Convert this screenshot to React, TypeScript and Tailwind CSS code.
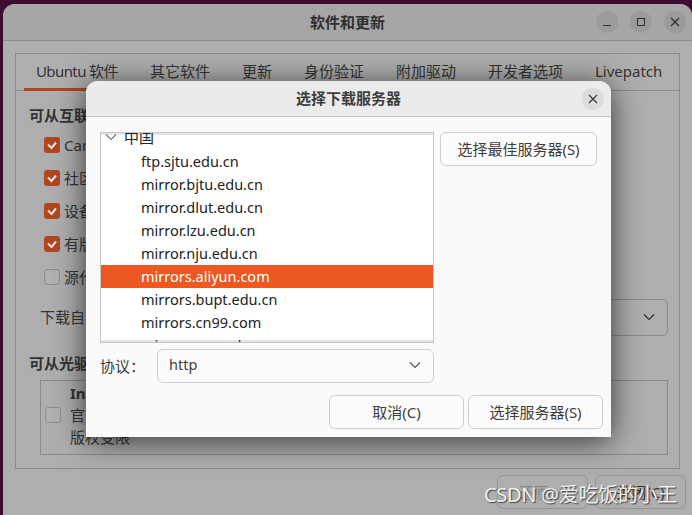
const font = { fontFamily: '"Noto Sans", "Noto Sans CJK SC", sans-serif' };

const servers = [
  'ftp.sjtu.edu.cn',
  'mirror.bjtu.edu.cn',
  'mirror.dlut.edu.cn',
  'mirror.lzu.edu.cn',
  'mirror.nju.edu.cn',
  'mirrors.aliyun.com',
  'mirrors.bupt.edu.cn',
  'mirrors.cn99.com',
  'mirrors.cqu.edu.cn',
];

const tabs = ['Ubuntu 软件', '其它软件', '更新', '身份验证', '附加驱动', '开发者选项', 'Livepatch'];

const sources = ['Canonical', '社区维护', '设备驱动', '有版权', '源代码'];

function Check({ on }: { on?: boolean }) {
  if (!on) return <span className="block w-4 h-4 rounded-[3px] border border-[#8c8c8c] bg-[#b0b0b0] shrink-0" />;
  return (
    <span className="flex items-center justify-center w-4 h-4 rounded-[3px] bg-[#b0461e] shrink-0">
      <svg width="12" height="12" viewBox="0 0 12 12" fill="none" stroke="#e6e6e6" strokeWidth="2">
        <path d="M2 5.5 5.5 9 10 3.5" />
      </svg>
    </span>
  );
}

function Chevron({ color }: { color: string }) {
  return (
    <svg width="12" height="8" viewBox="0 0 12 8" fill="none" stroke={color} strokeWidth="1.2">
      <path d="M1 1.5 6 6.5 11 1.5" />
    </svg>
  );
}

function Cross({ color }: { color: string }) {
  return (
    <svg width="10" height="10" viewBox="0 0 10 10" fill="none" stroke={color} strokeWidth="1.3">
      <path d="M1 1 9 9M9 1 1 9" />
    </svg>
  );
}

function Dialog() {
  return (
    <div className="absolute left-[86px] top-[81px] w-[525px] h-[356px] bg-[#fafafa] rounded-t-xl shadow-[0_4px_30px_rgba(0,0,0,0.7)] flex flex-col">
      <div className="h-[36px] shrink-0 bg-[#ebebeb] border-b border-[#c4c4c4] rounded-t-xl flex items-center justify-center relative">
        <span className="text-[15px] font-bold text-[#3d3d3d]">选择下载服务器</span>
        <span className="absolute right-[7px] top-[7px] w-[22px] h-[22px] rounded-full bg-[#dcdcdc] flex items-center justify-center">
          <Cross color="#3d3d3d" />
        </span>
      </div>
      <div className="flex flex-col pl-[14px] pt-[15px] pr-[8px]">
        <div className="flex gap-[6px]">
          <div className="w-[334px] h-[211px] bg-white border border-[#c6c6c6] overflow-hidden shadow-[inset_0_2px_0_#e6e6e6,inset_0_-2px_0_#e6e6e6]">
            <div className="-mt-[6px]">
              <div className="h-[23px] flex items-center gap-[7px] pl-[4px] pb-[3px] text-[15px] text-[#222]">
                <Chevron color="#777" />
                <span>中国</span>
              </div>
              {servers.map((s) => (
                <div
                  key={s}
                  className={
                    s === 'mirrors.aliyun.com'
                      ? 'h-[23px] flex items-center pl-[40px] text-[14.5px] bg-[#ec5722] text-[#fff]'
                      : 'h-[23px] flex items-center pl-[40px] text-[14.5px] text-[#222]'
                  }
                >
                  {s}
                </div>
              ))}
            </div>
          </div>
          <button className="w-[157px] h-[34px] rounded-md border border-[#cdcdcd] bg-[#fcfcfc] text-[15px] text-[#3d3d3d]">
            选择最佳服务器(S)
          </button>
        </div>
        <div className="flex items-center mt-[6px] w-[334px]">
          <span className="w-[57px] text-[15px] text-[#3d3d3d]">协议：</span>
          <div className="flex-1 h-[34px] rounded-md border border-[#cdcdcd] bg-[#fcfcfc] flex items-center justify-between pl-[11px] pr-[12px] pb-[2px] text-[14.5px] text-[#3d3d3d]">
            <span>http</span>
            <Chevron color="#555" />
          </div>
        </div>
        <div className="flex justify-end gap-[4px] mt-[12px]">
          <button className="w-[135px] h-[34px] rounded-md border border-[#cdcdcd] bg-[#fcfcfc] text-[15px] text-[#3d3d3d]">取消(C)</button>
          <button className="w-[135px] h-[34px] rounded-md border border-[#cdcdcd] bg-[#fcfcfc] text-[15px] text-[#3d3d3d]">选择服务器(S)</button>
        </div>
      </div>
    </div>
  );
}

export default function App() {
  return (
    <div className="relative w-[692px] h-[515px] overflow-hidden bg-[#3d0c33] pl-[3px] pt-[4px] text-[#333]" style={font}>
      <div className="w-[689px] h-[511px] bg-[#aeaeae] rounded-t-xl flex flex-col">
        <div className="h-[37px] shrink-0 bg-[#a6a6a6] border-b border-[#8a8a8a] rounded-t-xl flex items-center justify-center relative">
          <span className="text-[15px] font-bold text-[#2f2f2f]">软件和更新</span>
          <div className="absolute right-[6px] top-[7px] flex gap-[12px]">
            <span className="w-[22px] h-[22px] rounded-full bg-[#9b9b9b] flex items-center justify-center">
              <span className="block w-[8px] h-px bg-[#2f2f2f] mt-[7px]" />
            </span>
            <span className="w-[22px] h-[22px] rounded-full bg-[#9b9b9b] flex items-center justify-center">
              <span className="block w-[8px] h-[8px] border border-[#2f2f2f]" />
            </span>
            <span className="w-[22px] h-[22px] rounded-full bg-[#9b9b9b] flex items-center justify-center">
              <Cross color="#2f2f2f" />
            </span>
          </div>
        </div>
        <div className="mx-[12px] mt-[12px] h-[416px] border border-[#8a8a8a] flex flex-col">
          <div className="h-[37px] shrink-0 border-b border-[#8a8a8a] flex items-end pl-[8px] text-[15px] text-[#333] whitespace-nowrap">
            {tabs.map((t, i) => (
              <span
                key={t}
                className={
                  i === 0
                    ? 'h-[37px] -mb-px pl-[12px] pr-[16px] flex items-center border-b-[3px] border-[#b0461e] tracking-[-0.6px]'
                    : 'h-[37px] px-[16px] flex items-center'
                }
              >
                {t}
              </span>
            ))}
          </div>
          <div className="flex-1 flex flex-col pl-[13px] pr-[11px] pt-[13px] text-[15px]">
            <div className="font-bold">可从互联网下载</div>
            <div className="flex flex-col mt-[2px] pl-[15px]">
              {sources.map((s, i) => (
                <div key={s} className="h-[33px] flex items-center gap-[4px]">
                  <Check on={i < 4} />
                  <span>{s}</span>
                </div>
              ))}
            </div>
            <div className="flex items-center mt-[5px] pl-[11px]">
              <span className="w-[120px]">下载自：</span>
              <div className="flex-1 h-[37px] rounded-md border border-[#8a8a8a] flex items-center justify-end pr-[12px]">
                <Chevron color="#333" />
              </div>
            </div>
            <div className="font-bold mt-[16px]">可从光驱安装</div>
            <div className="mt-[6px] ml-[11px] h-[75px] border border-[#8a8a8a] flex items-center pl-[4px] pb-[5px] gap-[9px]">
              <Check />
              <div className="leading-[22px]">
                <div className="font-bold">Installable</div>
                <div>官方支持</div>
                <div>版权受限</div>
              </div>
            </div>
          </div>
        </div>
        <div className="flex justify-end gap-[7px] pr-[6px] mt-[6px]">
          <button className="w-[91px] h-[34px] rounded-md border border-[#959595] text-[15px] text-[#858585]">还原(V)</button>
          <button className="w-[91px] h-[34px] rounded-md border border-[#959595] text-[15px]">关闭(C)</button>
        </div>
      </div>
      <Dialog />
      <span className="absolute left-[484px] top-[481px] text-[20px] leading-[28px] tracking-[-0.3px] text-[#efefef] whitespace-nowrap [text-shadow:1px_1px_1px_#444]">CSDN @爱吃饭的小王</span>
    </div>
  );
}
